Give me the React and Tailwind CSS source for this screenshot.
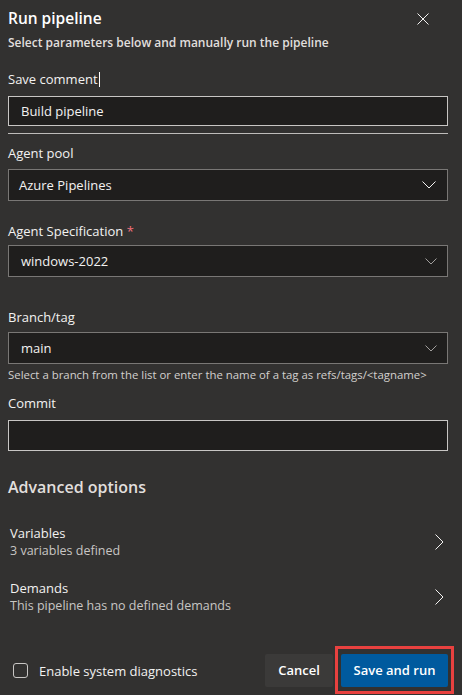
import React from "react";

const font = { fontFamily: '"Open Sans", "Noto Sans", sans-serif' };

function ChevronDown({ big }) {
  return big ? (
    <svg width="14" height="8" viewBox="0 0 14 8" className="shrink-0">
      <path d="M0.5 0.5 L7 7 L13.5 0.5" fill="none" stroke="#f3f2f1" strokeWidth="1" />
    </svg>
  ) : (
    <svg width="12" height="7" viewBox="0 0 12 7" className="shrink-0">
      <path d="M0.5 0.5 L6 6 L11.5 0.5" fill="none" stroke="#a19f9d" strokeWidth="1" />
    </svg>
  );
}

function ChevronRight() {
  return (
    <svg width="9" height="16" viewBox="0 0 9 16" className="shrink-0">
      <path d="M0.5 0.5 L8 8 L0.5 15.5" fill="none" stroke="#f3f2f1" strokeWidth="1" />
    </svg>
  );
}

export default function App() {
  return (
    <div
      className="w-[462px] h-[695px] bg-[#323130] text-[#f3f2f1] overflow-hidden pl-[8px] pr-[14px] flex flex-col"
      style={font}
    >
      {/* Title */}
      <div className="mt-[7px] flex items-center justify-between h-[22px]">
        <div className="text-[15.5px] leading-[22px] font-semibold text-white">Run pipeline</div>
        <svg width="12" height="12" viewBox="0 0 12 12" className="mr-[19px] mt-[2px]">
          <path d="M0.5 0.5 L11.5 11.5 M11.5 0.5 L0.5 11.5" stroke="#f3f2f1" strokeWidth="1" />
        </svg>
      </div>
      <div className="mt-[6px] text-[12px] leading-[16px] font-semibold text-[#e1dfdd]">
        Select parameters below and manually run the pipeline
      </div>

      {/* Save comment */}
      <div className="mt-[19px] text-[13px] leading-[18px] flex items-center">
        Save comment
        <span className="inline-block w-px h-[15px] bg-white ml-px"></span>
      </div>
      <div className="mt-[8px] h-[30px] border border-[#c8c6c4] bg-[#1f1e1d] flex items-center pl-[12px] text-[13px] leading-[18px]">
        Build pipeline
      </div>
      <div className="mt-[7px] h-px bg-[#bebcba]"></div>

      {/* Agent pool */}
      <div className="mt-[10px] text-[13px] leading-[18px]">Agent pool</div>
      <div className="mt-[7px] h-[32px] border border-[#797775] bg-[#1f1e1d] flex items-center justify-between pl-[10px] pr-[11px] text-[13px] leading-[18px]">
        <span>Azure Pipelines</span>
        <ChevronDown big />
      </div>

      {/* Agent Specification */}
      <div className="mt-[21px] text-[13px] leading-[18px]">
        Agent Specification <span className="text-[#f1707b]">*</span>
      </div>
      <div className="mt-[5px] h-[32px] border border-[#797775] bg-[#1f1e1d] flex items-center justify-between pl-[12px] pr-[10px] text-[13px] leading-[18px]">
        <span>windows-2022</span>
        <ChevronDown />
      </div>

      {/* Branch/tag */}
      <div className="mt-[31px] text-[13px] leading-[18px]">Branch/tag</div>
      <div className="mt-[6px] h-[32px] border border-[#797775] bg-[#1f1e1d] flex items-center justify-between pl-[12px] pr-[10px] text-[13px] leading-[18px]">
        <span>main</span>
        <ChevronDown />
      </div>
      <div className="mt-[3px] text-[11.4px] leading-[16px] text-[#d2d0ce]">
        Select a branch from the list or enter the name of a tag as refs/tags/&lt;tagname&gt;
      </div>

      {/* Commit */}
      <div className="mt-[11px] text-[13px] leading-[18px]">Commit</div>
      <div className="mt-[8px] h-[31px] border border-[#c8c6c4] bg-[#1f1e1d]"></div>

      {/* Advanced options */}
      <div className="mt-[25px] text-[16px] leading-[22px] font-semibold text-[#e1dfdd]">
        Advanced options
      </div>

      <div className="mt-[26px] pl-[2px] pr-[4px] flex items-center justify-between">
        <div className="flex flex-col">
          <div className="text-[13px] leading-[18px]">Variables</div>
          <div className="text-[12.5px] leading-[18px] text-[#c8c6c4]">3 variables defined</div>
        </div>
        <ChevronRight />
      </div>
      <div className="mt-[19px] pl-[2px] pr-[4px] flex items-center justify-between">
        <div className="flex flex-col">
          <div className="text-[13px] leading-[18px]">Demands</div>
          <div className="text-[12.5px] leading-[18px] text-[#c8c6c4]">
            This pipeline has no defined demands
          </div>
        </div>
        <ChevronRight />
      </div>

      {/* Footer */}
      <div className="mt-[39px] flex items-center justify-between">
        <div className="flex items-center ml-[5px]">
          <div className="w-[15px] h-[15px] border border-[#c8c6c4] rounded-[3px]"></div>
          <span className="ml-[11px] text-[13px] leading-[18px]">Enable system diagnostics</span>
        </div>
        <div className="flex items-center gap-[8px]">
          <button className="w-[68px] h-[33px] bg-[#3b3a39] rounded-[2px] text-[13px] font-semibold text-white flex items-center justify-center">
            Cancel
          </button>
          <div className="relative">
            <button className="w-[107px] h-[33px] bg-[#005a9e] rounded-[2px] text-[13px] font-semibold text-white flex items-center justify-center">
              Save and run
            </button>
            <div className="absolute -left-[6px] -right-[6px] -top-[8px] -bottom-[7px] border-[3px] border-[#e8413f] pointer-events-none"></div>
          </div>
        </div>
      </div>
    </div>
  );
}
